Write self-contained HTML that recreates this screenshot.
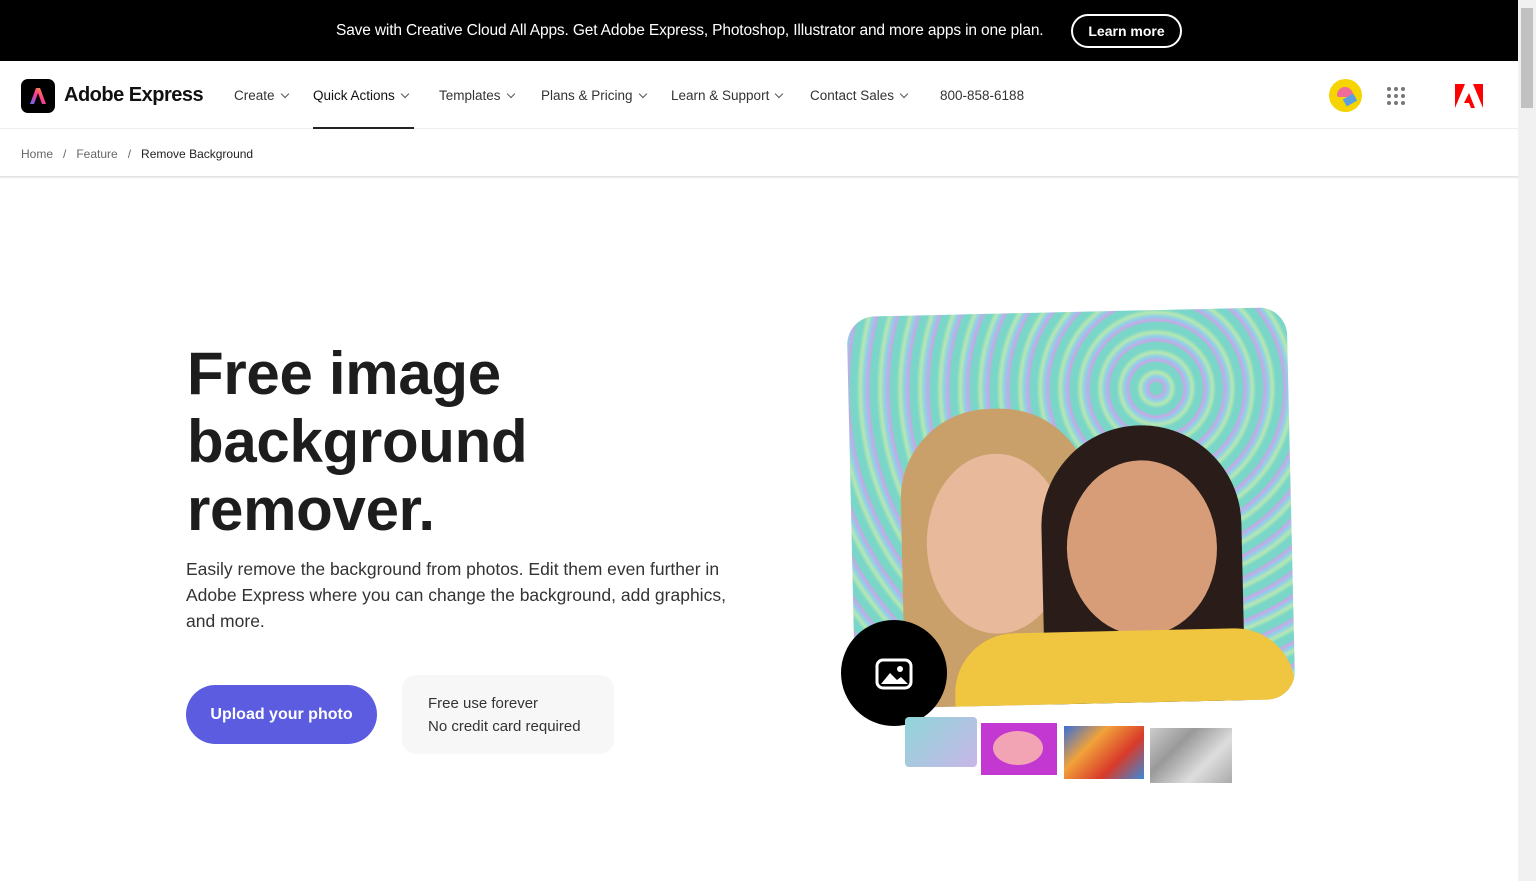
<!DOCTYPE html>
<html><head><meta charset="utf-8"><style>
*{margin:0;padding:0;box-sizing:border-box}
body{width:1536px;height:881px;overflow:hidden;background:#fff;font-family:"Liberation Sans",sans-serif;position:relative;color:#222}
.top{position:absolute;left:0;top:0;width:1518px;height:61px;background:#000;color:#fff}
.tt{position:absolute;left:336px;top:22px;font-size:15.5px;white-space:nowrap;letter-spacing:-0.15px}
.lm{position:absolute;left:1071px;top:14px;width:111px;height:34px;border:2px solid #fff;border-radius:17px;font-weight:bold;font-size:14px;display:flex;align-items:center;justify-content:center}
.sb{position:absolute;right:0;top:0;width:18px;height:881px;background:#f1f1f1}
.sb div{position:absolute;left:3px;top:8px;width:12px;height:100px;background:#c1c1c1}
.nav{position:absolute;top:61px;left:0;width:1518px;height:68px;border-bottom:1px solid #eee}
.logo{position:absolute;left:21px;top:18px;width:34px;height:34px;background:#000;border-radius:7px}
.brand{position:absolute;left:64px;top:23px;font-size:20px;font-weight:bold;color:#111;letter-spacing:-0.5px}
.ni{position:absolute;top:27px;font-size:13.5px;color:#333}
.ni i{display:inline-block;width:6px;height:6px;border-right:1px solid #555;border-bottom:1px solid #555;transform:rotate(45deg);margin-left:7px;position:relative;top:-3px}
.ul{position:absolute;left:313px;top:66px;width:101px;height:2px;background:#222}
.bc{position:absolute;left:21px;top:147px;font-size:12px;color:#666}
.bc b{font-weight:normal;color:#222}
.shadow{position:absolute;left:0;top:176px;width:1518px;height:3px;background:linear-gradient(#ddd,#fff)}
h1{position:absolute;left:187px;top:340px;font-size:60px;line-height:68px;font-weight:bold;color:#1d1d1d;letter-spacing:-0.3px}
.p{position:absolute;left:186px;top:556px;width:560px;font-size:17.5px;line-height:26px;color:#333}
.btn{position:absolute;left:186px;top:685px;width:191px;height:59px;border-radius:30px;background:#5c5ce0;color:#fff;font-weight:bold;font-size:16px;display:flex;align-items:center;justify-content:center}
.free{position:absolute;left:402px;top:675px;width:212px;height:79px;border-radius:14px;background:#f7f7f7;font-size:15px;line-height:23px;color:#333;padding:17px 26px;white-space:nowrap}
.card{position:absolute;left:851px;top:312px;width:440px;height:392px;border-radius:28px;overflow:hidden;transform:rotate(-1.3deg);
background:repeating-radial-gradient(circle at 70% 20%,#7ad6c8 0 6px,#c9a6e6 8px,#8fd0e8 12px,#b7e8b0 16px,#7ad6c8 20px)}
.circ{position:absolute;left:841px;top:620px;width:106px;height:106px;border-radius:50%;background:#000}
</style></head><body>
<div class="top"><div class="tt">Save with Creative Cloud All Apps. Get Adobe Express, Photoshop, Illustrator and more apps in one plan.</div><div class="lm">Learn more</div></div>
<div class="sb"><div></div></div>
<div class="nav">
<div class="logo"><svg width="34" height="34" viewBox="0 0 34 34"><defs><linearGradient id="g" x1="0" y1="1" x2="1" y2="0"><stop offset="0" stop-color="#5b6bff"/><stop offset=".5" stop-color="#ff3b8a"/><stop offset="1" stop-color="#ffb02e"/></linearGradient></defs><path d="M9 25 L15 9 H19 L25 25 H21 L17 14 L13 25Z" fill="url(#g)"/></svg></div>
<div class="brand">Adobe Express</div>
<div class="ni" style="left:234px">Create<i></i></div>
<div class="ni" style="left:313px;color:#111">Quick Actions<i></i></div>
<div class="ni" style="left:439px">Templates<i></i></div>
<div class="ni" style="left:541px">Plans &amp; Pricing<i></i></div>
<div class="ni" style="left:671px">Learn &amp; Support<i></i></div>
<div class="ni" style="left:810px">Contact Sales<i></i></div>
<div class="ni" style="left:940px">800-858-6188</div>
<div class="ul"></div>
<div style="position:absolute;left:1329px;top:18px;width:33px;height:33px;border-radius:50%;background:#f5d400"><div style="position:absolute;left:8px;top:8px;width:16px;height:10px;border-radius:8px 8px 2px 2px;background:#f06a9a"></div><div style="position:absolute;left:15px;top:17px;width:12px;height:8px;background:#5aa0e0;transform:rotate(-30deg)"></div></div>
<svg style="position:absolute;left:1386px;top:25px" width="20" height="20"><g fill="#777"><circle cx="3" cy="3" r="2"/><circle cx="10" cy="3" r="2"/><circle cx="17" cy="3" r="2"/><circle cx="3" cy="10" r="2"/><circle cx="10" cy="10" r="2"/><circle cx="17" cy="10" r="2"/><circle cx="3" cy="17" r="2"/><circle cx="10" cy="17" r="2"/><circle cx="17" cy="17" r="2"/></g></svg>
<svg style="position:absolute;left:1455px;top:23px" width="28" height="24" viewBox="0 0 28 24"><path d="M0 0H10L0 24Z M18 0H28V24Z M14 9L20 24H16L14 19H9Z" fill="#f00"/></svg>
</div>
<div class="bc">Home &nbsp; / &nbsp; Feature &nbsp; / &nbsp; <b>Remove Background</b></div>
<div class="shadow"></div>
<h1>Free image<br>background<br>remover.</h1>
<div class="p">Easily remove the background from photos. Edit them even further in Adobe Express where you can change the background, add graphics, and more.</div>
<div class="btn">Upload your photo</div>
<div class="free">Free use forever<br>No credit card required</div>
<div class="card">
<div style="position:absolute;left:50px;top:95px;width:190px;height:300px;border-radius:90px 90px 20px 20px;background:#c9a06a"></div>
<div style="position:absolute;left:75px;top:140px;width:140px;height:180px;border-radius:50%;background:#e8b99a"></div>
<div style="position:absolute;left:190px;top:115px;width:200px;height:290px;border-radius:100px 100px 20px 20px;background:#2a1c18"></div>
<div style="position:absolute;left:215px;top:150px;width:150px;height:175px;border-radius:50%;background:#d79d78"></div>
<div style="position:absolute;left:100px;top:320px;width:340px;height:90px;border-radius:60px 60px 0 0;background:#f0c540"></div>
</div>
<div class="circ"><svg style="position:absolute;left:34px;top:38px" width="38" height="32" viewBox="0 0 38 32"><rect x="2" y="2" width="34" height="28" rx="6" fill="none" stroke="#fff" stroke-width="3"/><circle cx="25" cy="11" r="3" fill="#fff"/><path d="M6 26 L15 15 L22 22 L26 19 L33 26Z" fill="#fff"/></svg></div>
<div style="position:absolute;left:905px;top:717px;width:72px;height:50px;background:linear-gradient(135deg,#8fd6d8,#c8b6e8);border-radius:4px"></div>
<div style="position:absolute;left:981px;top:723px;width:76px;height:52px;background:#c338d0"><div style="position:absolute;left:12px;top:8px;width:50px;height:34px;border-radius:50%;background:#f3a4b4"></div></div>
<div style="position:absolute;left:1064px;top:726px;width:80px;height:53px;background:linear-gradient(135deg,#3a6fd8,#f2a23a,#d83a2a,#3a8ad8)"></div>
<div style="position:absolute;left:1150px;top:728px;width:82px;height:55px;background:linear-gradient(135deg,#ccc,#999,#ddd,#aaa)"></div>
</body></html>
